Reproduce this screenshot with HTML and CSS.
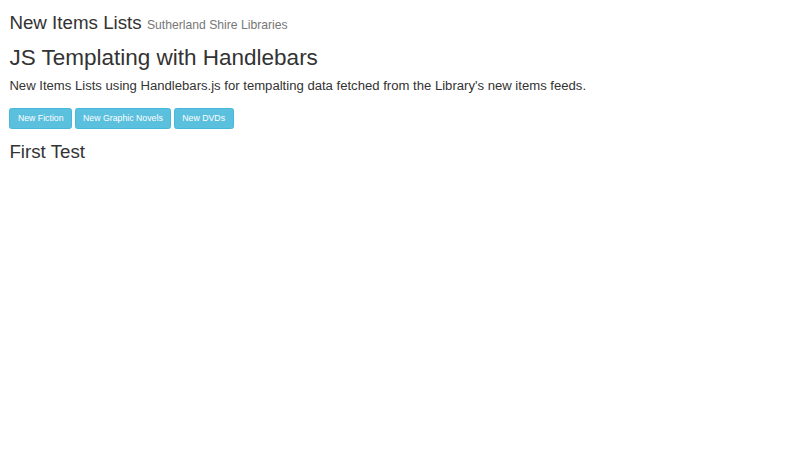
FILE: index.html
```html
<!DOCTYPE html>
<html lang="en">
<head>
<meta charset="utf-8">
<title>New Items Lists</title>
<link rel="stylesheet" href="styles.css">
</head>
<body>
<div class="container">
  <h2 class="title">New Items Lists <small class="subtitle">Sutherland Shire Libraries</small></h2>
  <h1 class="heading">JS Templating with Handlebars</h1>
  <p class="lead">New Items Lists using Handlebars.js for tempalting data fetched from the Library's new items feeds.</p>
  <p class="actions">
    <a class="btn" href="#">New Fiction</a>
    <a class="btn" href="#">New Graphic Novels</a>
    <a class="btn" href="#">New DVDs</a>
  </p>
  <h2 class="title">First Test</h2>
</div>
</body>
</html>
```

FILE: styles.css
```css
html, body {
  margin: 0;
  padding: 0;
  background: #fff;
}
body {
  font-family: "Liberation Sans", Arial, sans-serif;
  font-size: 8.75px;
  line-height: 1.428571;
  color: #333;
}
.container {
  padding: 0 9.375px;
}
.title {
  font-size: 18.75px;
  font-weight: 400;
  line-height: 1.1;
  margin: 12.5px 0 6.25px;
}
.subtitle {
  font-size: 65%;
  color: #777;
  font-weight: 400;
  line-height: 1;
}
.heading {
  font-size: 22.5px;
  font-weight: 400;
  line-height: 1.1;
  margin: 12.5px 0 6.25px;
}
.lead {
  font-size: 13.125px;
  font-weight: 300;
  line-height: 1.4;
  margin: 0 0 12.5px;
}
.actions {
  margin: 0 0 6.25px;
}
.btn {
  display: inline-block;
  padding: 3.75px 7.5px;
  font-size: 8.75px;
  line-height: 1.428571;
  color: #fff;
  background: #5bc0de;
  border: 0.625px solid #46b8da;
  border-radius: 2.5px;
  text-decoration: none;
  vertical-align: middle;
}
```
